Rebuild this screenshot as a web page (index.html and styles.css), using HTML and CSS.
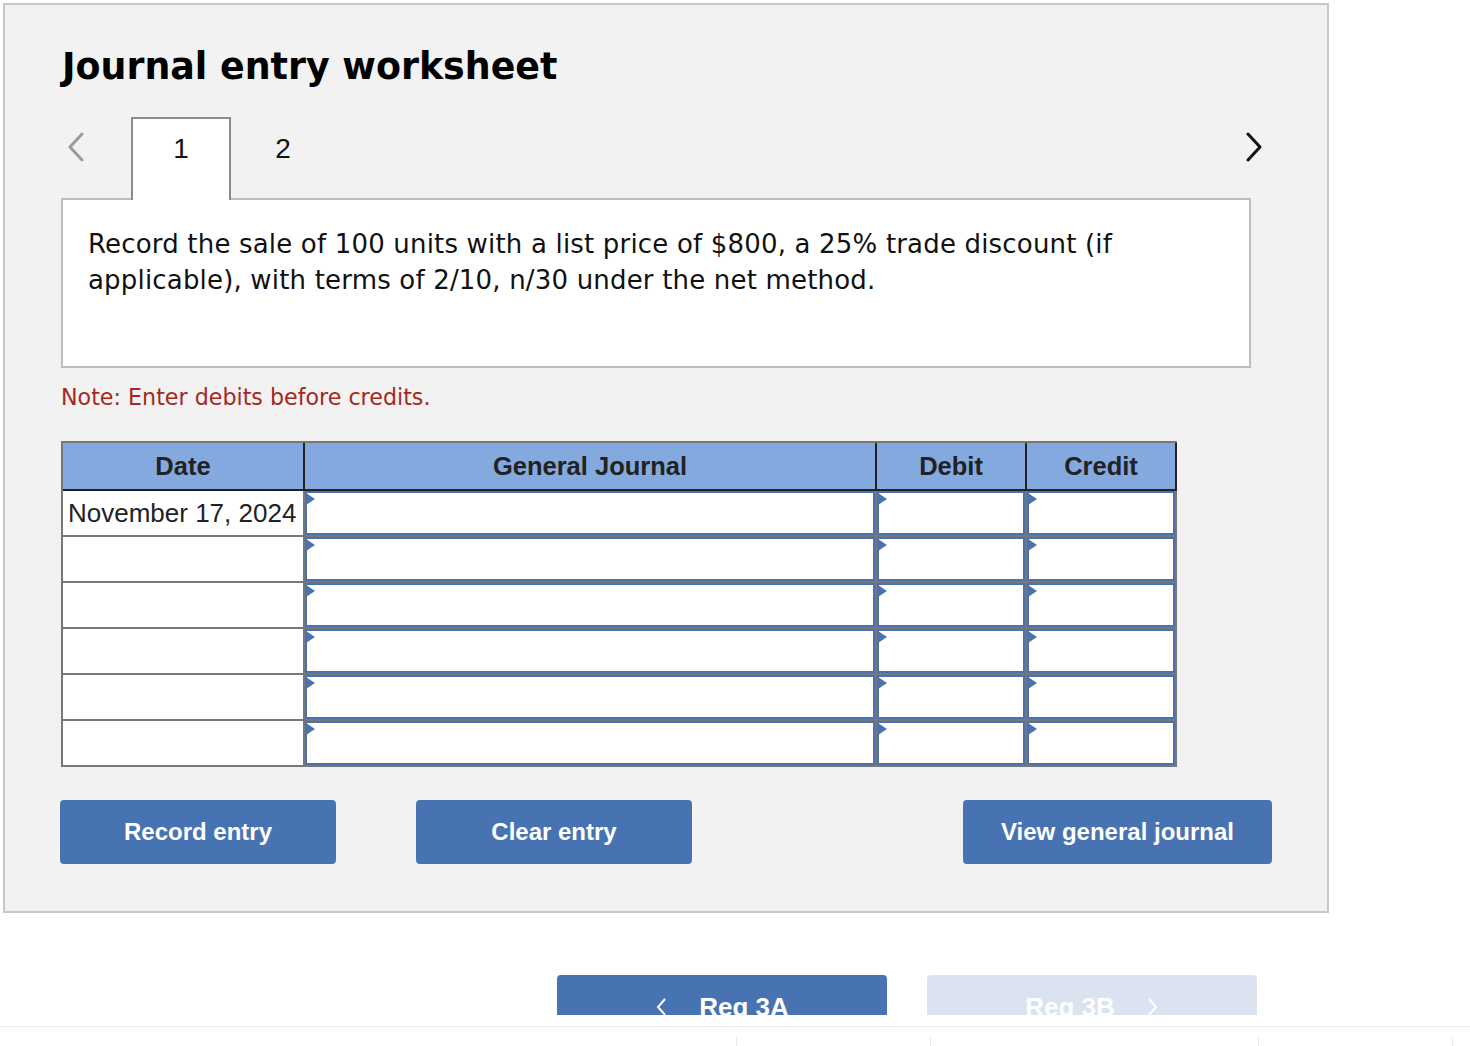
FILE: index.html
```html
<!DOCTYPE html>
<html lang="en">
<head>
    <meta charset="UTF-8">
    <title>Journal entry worksheet</title>
    <link rel="stylesheet" href="styles.css">
</head>
<body>
    <div class="worksheet">
        <h1 class="title">Journal entry worksheet</h1>

        <div class="tabs">
            <span class="tab-arrow prev">
                <svg width="20" height="30" viewBox="0 0 20 30"><polyline points="16,2 4,15 16,28" fill="none" stroke="#9b9b9b" stroke-width="3" stroke-linecap="round" stroke-linejoin="round"/></svg>
            </span>
            <div class="tab active">1</div>
            <div class="tab">2</div>
            <span class="tab-arrow next">
                <svg width="20" height="30" viewBox="0 0 20 30"><polyline points="4,2 16,15 4,28" fill="none" stroke="#111" stroke-width="3" stroke-linecap="round" stroke-linejoin="round"/></svg>
            </span>
        </div>

        <div class="question">
            Record the sale of 100 units with a list price of $800, a 25% trade discount (if applicable), with terms of 2/10, n/30 under the net method.
        </div>

        <p class="note">Note: Enter debits before credits.</p>

        <table class="journal">
            <colgroup>
                <col class="col-date">
                <col class="col-account">
                <col class="col-amount">
                <col class="col-amount">
            </colgroup>
            <thead>
                <tr>
                    <th>Date</th>
                    <th>General Journal</th>
                    <th>Debit</th>
                    <th>Credit</th>
                </tr>
            </thead>
            <tbody id="journalRows"></tbody>
        </table>

        <div class="actions">
            <button class="btn">Record entry</button>
            <button class="btn">Clear entry</button>
            <button class="btn view">View general journal</button>
        </div>
    </div>

    <div class="req-nav">
        <button class="req-btn">
            <svg width="12" height="20" viewBox="0 0 12 20"><polyline points="10,2 3,10 10,18" fill="none" stroke="#fff" stroke-width="2"/></svg>
            <span>Req 3A</span>
        </button>
        <button class="req-btn disabled">
            <span>Req 3B</span>
            <svg width="12" height="20" viewBox="0 0 12 20"><polyline points="2,2 9,10 2,18" fill="none" stroke="#fff" stroke-width="2"/></svg>
        </button>
    </div>

    <div class="footer-line">
        <span style="width:737px"></span>
        <span style="width:194px"></span>
        <span style="width:328px"></span>
        <span style="width:194px"></span>
    </div>

    <script>
        // 6 rows, only the first one has a date
        const dates = ['November 17, 2024', '', '', '', '', ''];
        const body = document.getElementById('journalRows');

        dates.forEach(date => {
            const tr = document.createElement('tr');
            tr.innerHTML = `
                <td class="date">${date}</td>
                <td class="entry"><div class="field"></div></td>
                <td class="entry"><div class="field"></div></td>
                <td class="entry"><div class="field"></div></td>
            `;
            body.appendChild(tr);
        });
    </script>
</body>
</html>
```

FILE: styles.css
```css
:root {
    --blue: #4873b2;
    --field-blue: #4a72b0;
    --grid-grey: #777;
}

body {
    margin: 0;
    background: #fff;
    font-family: "Liberation Sans", Arial, sans-serif;
    color: #111;
}

/* main panel */
.worksheet {
    margin: 3px 0 0 3px;
    width: 1267px;
    padding: 40px 0 47px 55px;
    background: #f2f2f2;
    border: 2px solid #c8c8c8;
}

.title {
    margin: 0 0 0 2px;
    font-family: "DejaVu Sans", Verdana, sans-serif;
    font-size: 36.4px;
    line-height: 44px;
    font-weight: bold;
    color: #000;
}

/* tabs */
.tabs {
    display: flex;
    align-items: flex-start;
    width: 1204px;
    height: 81px;
    margin-top: 28px;
}

.tab-arrow {
    display: flex;
    margin-top: 15px;
}

.tab-arrow.prev {
    width: 71px;
    padding-left: 6px;
    box-sizing: border-box;
}

.tab-arrow.next {
    margin-left: auto;
}

.tab {
    width: 100px;
    height: 83px;
    box-sizing: border-box;
    padding-top: 14px;
    border: 2px solid transparent;
    border-bottom: none;
    text-align: center;
    font-size: 28px;
    line-height: 32px;
    color: #111;
}

.tab + .tab {
    padding-left: 4px;
}

.tab.active {
    position: relative;
    z-index: 1;
    background: #fff;
    border-color: #8c8c8c;
}

/* question box */
.question {
    width: 1136px;
    height: 140px;
    margin-left: 1px;
    padding: 26px 25px 0 25px;
    border: 2px solid #bdbdbd;
    background: #fff;
    font-family: "DejaVu Sans", Verdana, sans-serif;
    font-size: 26px;
    line-height: 36px;
    letter-spacing: 0.18px;
    color: #111;
}

.note {
    margin: 15px 0 0 1px;
    font-family: "DejaVu Sans", Verdana, sans-serif;
    font-size: 22.2px;
    line-height: 28px;
    color: #a5281f;
}

/* journal table */
.journal {
    margin: 30px 0 0 1px;
    border-collapse: separate;
    border-spacing: 0;
    table-layout: fixed;
    width: 1116px;
    border-top: 2px solid var(--grid-grey);
    border-left: 2px solid var(--grid-grey);
    font-size: 26px;
}

.col-date { width: 242px; }
.col-account { width: 572px; }
.col-amount { width: 150px; }

.journal th {
    height: 46px;
    padding: 0;
    background: #83a9de;
    border-right: 2px solid #222;
    border-bottom: 2px solid #222;
    font-size: 25.5px;
    font-weight: bold;
    color: #222;
}

.journal td {
    height: 44px;
    padding: 0;
    border-right: 2px solid var(--grid-grey);
    border-bottom: 2px solid var(--grid-grey);
    background: #fff;
}

.journal td.date {
    padding-left: 5px;
    white-space: nowrap;
    overflow: hidden;
    color: #222;
}

.journal td.entry {
    background: var(--grid-grey);
}

.field {
    position: relative;
    height: 40px;
    border: 2px solid var(--field-blue);
    background: #fff;
}

.field::before {
    content: '';
    position: absolute;
    left: -1px;
    top: 0;
    border-top: 6px solid transparent;
    border-bottom: 6px solid transparent;
    border-left: 9px solid var(--field-blue);
}

/* buttons */
.actions {
    display: flex;
    gap: 80px;
    width: 1212px;
    margin-top: 33px;
}

.btn {
    width: 276px;
    height: 64px;
    border: none;
    border-radius: 4px;
    background: var(--blue);
    color: #fff;
    font-family: "Liberation Sans", Arial, sans-serif;
    font-size: 24px;
    font-weight: bold;
    cursor: pointer;
}

.btn.view {
    width: 309px;
    margin-left: auto;
}

/* Req navigation (cut off at the bottom) */
.req-nav {
    display: flex;
    gap: 40px;
    height: 40px;
    padding: 62px 0 0 557px;
    overflow: hidden;
}

.req-btn {
    display: flex;
    align-items: center;
    justify-content: center;
    gap: 32px;
    flex: none;
    width: 330px;
    height: 64px;
    border: none;
    border-radius: 4px;
    background: var(--blue);
    color: #fff;
    font-family: "Liberation Sans", Arial, sans-serif;
    font-size: 26px;
    font-weight: bold;
}

.req-btn.disabled {
    background: #dae3ef;
}

.footer-line {
    display: flex;
    height: 19px;
    margin-top: 11px;
    border-top: 1px solid #ebebeb;
}

.footer-line span {
    height: 9px;
    margin-top: 10px;
    border-right: 1px solid #ebebeb;
    box-sizing: border-box;
    flex: none;
}
```
